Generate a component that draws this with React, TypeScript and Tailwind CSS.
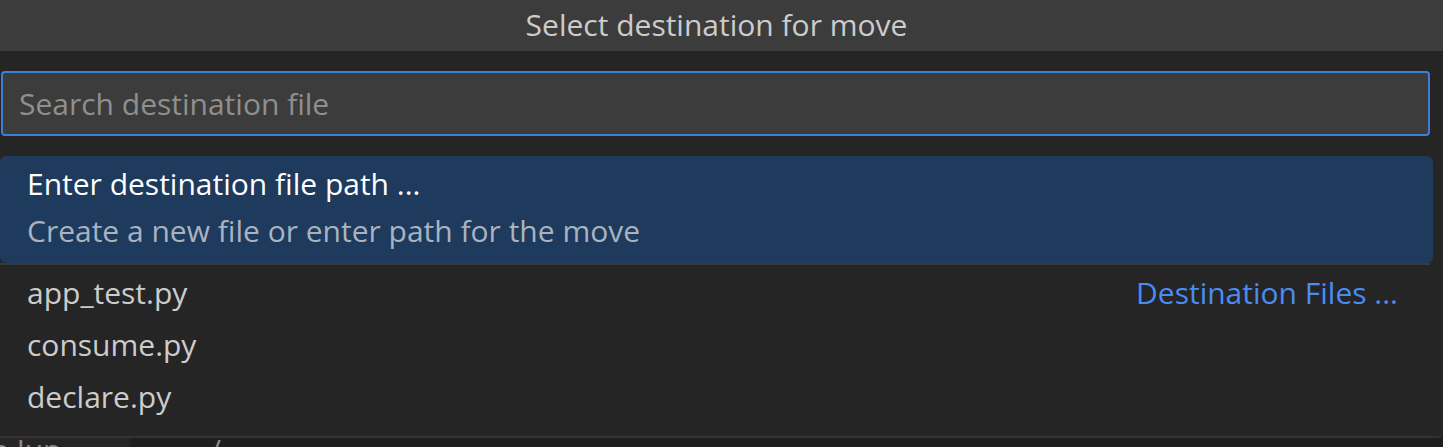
import { useState } from 'react'

type FileRow = { name: string; hint?: string }

const files: FileRow[] = [
  { name: 'app_test.py', hint: 'Destination Files ...' },
  { name: 'consume.py' },
  { name: 'declare.py' },
]

const font = { fontFamily: '"Open Sans", "Noto Sans", sans-serif' }

export default function App() {
  const [query, setQuery] = useState('')

  return (
    <div className="w-[1443px] h-[447px] overflow-hidden bg-[#1e1e1e] text-[30px]" style={font}>
      <div className="bg-[#252526] border-b-2 border-[#333333] rounded-br-[6px] h-[438px]">
        <div className="h-[51px] pb-[2px] pr-[10px] bg-[#3c3c3c] flex items-center justify-center text-[#cccccc]">
          Select destination for move
        </div>

        <div className="pt-[20px] pl-[1px]">
          <input
            value={query}
            onChange={e => setQuery(e.target.value)}
            placeholder="Search destination file"
            className="w-[1429px] h-[65px] bg-[#3c3c3c] border-2 border-[#3d7fd6] rounded-[4px] px-[16px] text-[#cccccc] placeholder:text-[#8f8f8f] outline-none"
          />
        </div>

        <div className="mt-[20px] w-[1433px]">
          <div className="h-[107px] bg-[#1e3a5c] rounded-[6px] px-[27px] pt-[8px] flex flex-col gap-[7px]">
            <div className="text-white leading-[40px]">Enter destination file path ...</div>
            <div className="text-[#a9b3c0] leading-[40px]">Create a new file or enter path for the move</div>
          </div>
          <div className="h-[2px] bg-[#3a3a3a] mr-[3px]" />

          <div className="pt-[1px]">
            {files.map(f => (
              <div key={f.name} className="h-[52px] pl-[27px] pr-[35px] flex items-center justify-between">
                <span className="text-[#cccccc]">{f.name}</span>
                {f.hint && <span className="text-[#4a8cf2]">{f.hint}</span>}
              </div>
            ))}
          </div>
        </div>
      </div>

      <div className="flex h-[9px] overflow-hidden text-[#8a8a8a]">
        <div className="w-[138px] bg-[#252526] -ml-[8px]">
          <div className="leading-[30px] -mt-[3px]">e Jup</div>
        </div>
        <div className="flex-1 pl-[80px]">
          <div className="leading-[30px] -mt-[3px]">/</div>
        </div>
      </div>
    </div>
  )
}
